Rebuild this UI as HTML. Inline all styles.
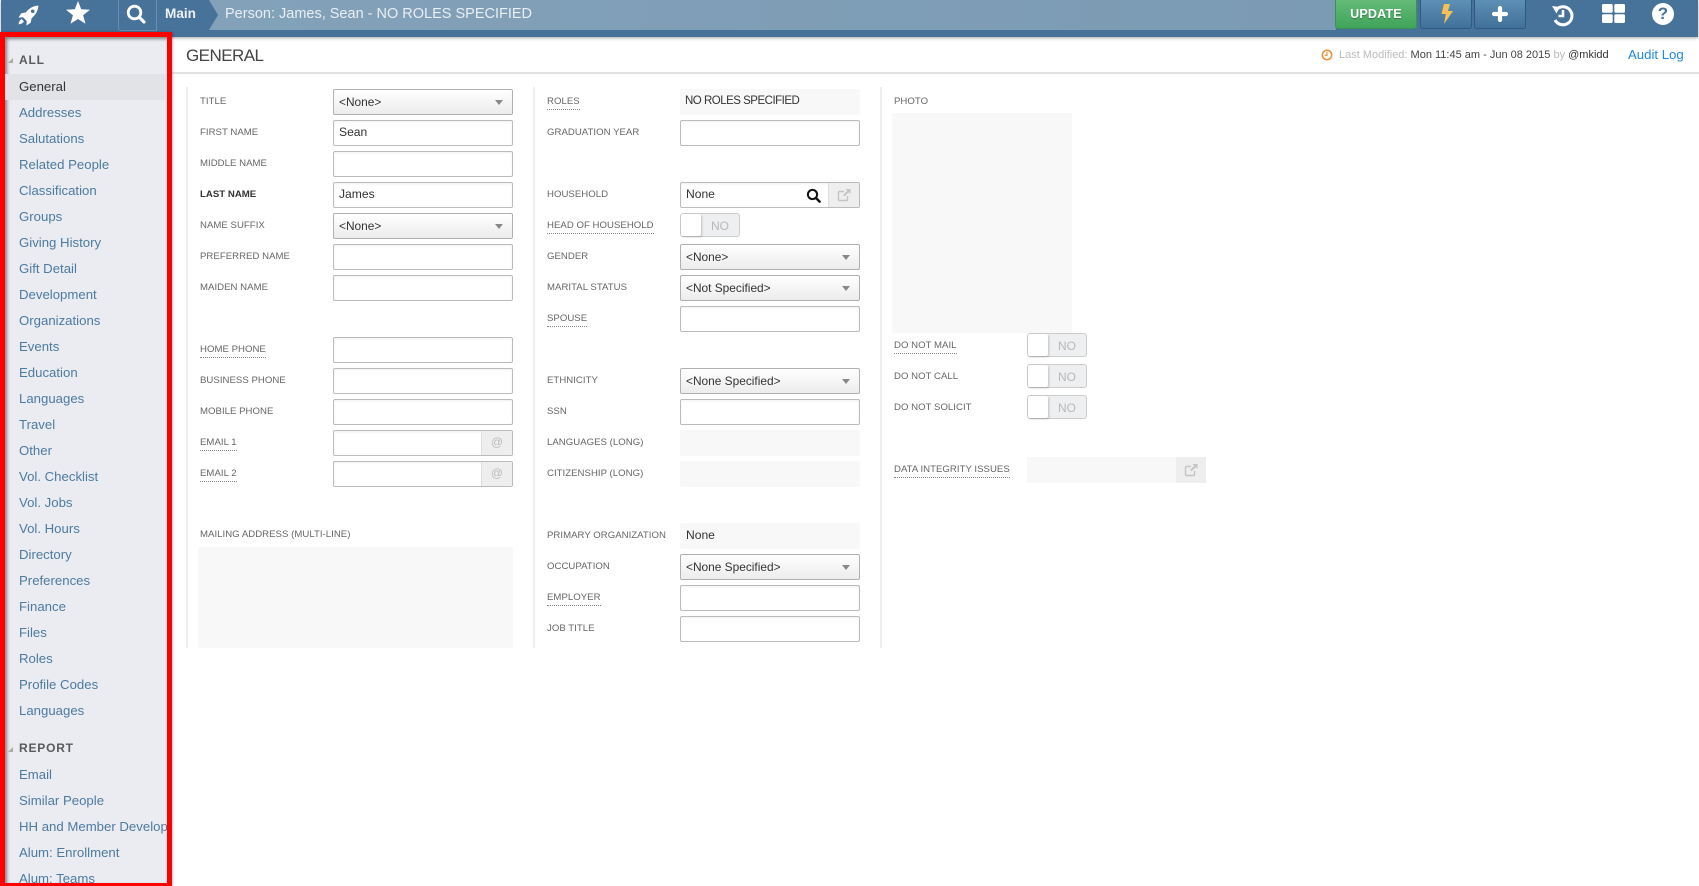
<!DOCTYPE html>
<html>
<head>
<meta charset="utf-8">
<style>
html,body{margin:0;padding:0;background:#fff;}
body{width:1699px;height:886px;overflow:hidden;position:relative;font-family:"Liberation Sans",sans-serif;color:#333;}
.a{position:absolute;}
.hdr{position:absolute;left:1px;top:0;width:1697px;height:37px;background:#47729a;box-shadow:0 1px 3px rgba(0,0,0,.35);}
.bar{position:absolute;left:205px;top:0;width:1130px;height:30px;background:linear-gradient(90deg,#83a2ba,#7b9ab3);}
.tab{position:absolute;left:155px;top:0;width:62px;height:30px;background:#47729a;clip-path:polygon(0 0,53px 0,62px 15px,53px 30px,0 30px);}
.srch{position:absolute;left:117px;top:-1px;width:37px;height:30px;border:1px solid #6b90ad;border-bottom-left-radius:3px;}
.btn{position:absolute;top:-1px;height:30px;box-sizing:border-box;border:1px solid #2f5a80;border-radius:0 0 3px 3px;background:linear-gradient(#5e8fb5,#41709a);}
.upd{position:absolute;left:1335px;top:-1px;width:82px;height:30px;box-sizing:border-box;border:1px solid #3a9352;border-radius:0 0 3px 3px;background:linear-gradient(#64bb78,#3fa45a);color:#fff;font-weight:bold;font-size:12.5px;line-height:28px;text-align:center;text-shadow:0 1px 1px rgba(0,0,0,.3);letter-spacing:.2px;}
.side{position:absolute;left:5px;top:37px;width:162px;height:846px;background:#eaecf2;overflow:hidden;box-shadow:inset 2px 2px 3px rgba(0,0,0,.45);}
.side div{position:absolute;left:14px;white-space:nowrap;font-size:13.2px;line-height:28px;color:#4d7a9f;}
.side .hd{font-weight:bold;font-size:12px;color:#5a5a5a;letter-spacing:.8px;}
.side .sel{left:0;width:162px;height:26px;background:#e1e3e7;}
.side .tri{left:3px;width:0;height:0;border-left:5px solid transparent;border-bottom:5px solid #aaa;}
.red{position:absolute;left:0;top:32px;width:172px;height:854px;box-sizing:border-box;border:solid #fe0000;border-width:5px 5px 3px 5px;box-shadow:1px 0 2px rgba(0,0,0,.25);}
.l{position:absolute;font-size:9.6px;line-height:26px;color:#666;white-space:nowrap;letter-spacing:.03px;}
.l span{border-bottom:1px dotted #888;padding-bottom:2px;}
.l b{color:#333;}
.i,.s,.r{position:absolute;width:180px;height:26px;box-sizing:border-box;font-size:12.1px;line-height:22px;padding-left:5px;color:#333;white-space:nowrap;}
.i{border:1px solid #bbb;border-radius:2px;background:#fff;box-shadow:inset 0 1px 2px rgba(0,0,0,.06);}
.s{border:1px solid #b0b0b0;border-radius:2px;background:linear-gradient(#fff,#ececec);font-size:11.9px;line-height:24px;}
.s:after{content:"";position:absolute;right:9px;top:10px;width:0;height:0;border-left:4.5px solid transparent;border-right:4.5px solid transparent;border-top:5px solid #888;}
.r{background:#f8f8f8;border-radius:2px;border:1px solid #f8f8f8;}
.add{position:absolute;right:0;top:0;bottom:0;width:30px;background:#eeeeee;border-left:1px solid #ddd;text-align:center;color:#bbb;font-size:12px;line-height:23px;}
.add svg{position:absolute;left:8px;top:5px;}
.t{position:absolute;width:60px;height:24px;box-sizing:border-box;border:1px solid #ccc;border-radius:3px;background:#eeeff0;font-size:12px;line-height:25px;color:#b8b8b8;text-align:right;padding-right:10px;}
.t:before{content:"";position:absolute;left:0;top:0;width:20px;height:22px;background:#fff;border-radius:2px;box-shadow:1px 1px 2px rgba(0,0,0,.2);}
.v{position:absolute;top:87px;width:2px;height:561px;background:#eeeeee;}
</style>
</head>
<body>

<div class="a" style="left:171px;top:72px;width:1528px;height:2px;background:#e2e2e2;"></div>
<div class="a" style="left:186px;top:47px;font-size:17px;line-height:18px;color:#444;letter-spacing:-.55px;">GENERAL</div>

<svg class="a" style="left:1321px;top:49px" width="12" height="12" viewBox="0 0 12 12"><circle cx="6" cy="6" r="4.7" fill="none" stroke="#f28c38" stroke-width="1.5"/><path d="M6 3v3.3H3.6" fill="none" stroke="#f28c38" stroke-width="1.2"/></svg>
<div class="a" style="left:1339px;top:47px;font-size:11px;line-height:16px;color:#bbb;white-space:nowrap;">Last Modified: <span style="color:#444">Mon 11:45 am - Jun 08 2015</span> by <span style="color:#333">@mkidd</span></div>
<div class="a" style="left:1628px;top:46px;font-size:13.2px;line-height:17px;color:#1e88e5;white-space:nowrap;">Audit Log</div>

<div class="v" style="left:186px"></div>
<div class="v" style="left:533px"></div>
<div class="v" style="left:880px"></div>

<!-- column 1 -->
<div class="l" style="left:200px;top:89px">TITLE</div><div class="s" style="left:333px;top:89px">&lt;None&gt;</div>
<div class="l" style="left:200px;top:120px">FIRST NAME</div><div class="i" style="left:333px;top:120px">Sean</div>
<div class="l" style="left:200px;top:151px">MIDDLE NAME</div><div class="i" style="left:333px;top:151px"></div>
<div class="l" style="left:200px;top:182px"><b>LAST NAME</b></div><div class="i" style="left:333px;top:182px">James</div>
<div class="l" style="left:200px;top:213px">NAME SUFFIX</div><div class="s" style="left:333px;top:213px">&lt;None&gt;</div>
<div class="l" style="left:200px;top:244px">PREFERRED NAME</div><div class="i" style="left:333px;top:244px"></div>
<div class="l" style="left:200px;top:275px">MAIDEN NAME</div><div class="i" style="left:333px;top:275px"></div>
<div class="l" style="left:200px;top:337px"><span>HOME PHONE</span></div><div class="i" style="left:333px;top:337px"></div>
<div class="l" style="left:200px;top:368px">BUSINESS PHONE</div><div class="i" style="left:333px;top:368px"></div>
<div class="l" style="left:200px;top:399px">MOBILE PHONE</div><div class="i" style="left:333px;top:399px"></div>
<div class="l" style="left:200px;top:430px"><span>EMAIL 1</span></div><div class="i" style="left:333px;top:430px"><div class="add">@</div></div>
<div class="l" style="left:200px;top:461px"><span>EMAIL 2</span></div><div class="i" style="left:333px;top:461px"><div class="add">@</div></div>
<div class="l" style="left:200px;top:522px">MAILING ADDRESS (MULTI-LINE)</div>
<div class="a" style="left:198px;top:547px;width:315px;height:101px;background:#f8f8f8;border-radius:2px;"></div>

<!-- column 2 -->
<div class="l" style="left:547px;top:89px"><span>ROLES</span></div><div class="r" style="left:680px;top:89px;font-size:11.5px;letter-spacing:-.5px;padding-left:4px;">NO ROLES SPECIFIED</div>
<div class="l" style="left:547px;top:120px">GRADUATION YEAR</div><div class="i" style="left:680px;top:120px"></div>
<div class="l" style="left:547px;top:182px">HOUSEHOLD</div>
<div class="i" style="left:680px;top:182px">None
<svg class="a" style="left:125px;top:5px" width="15" height="15" viewBox="0 0 15 15"><circle cx="6.500" cy="6.500" r="4.600" fill="none" stroke="#111" stroke-width="2"/><path d="M10 10l3.600 3.600" stroke="#111" stroke-width="2.400" stroke-linecap="round"/></svg>
<div class="add"><svg width="14" height="14" viewBox="0 0 14 14"><path d="M10.500 8v3.500a1 1 0 0 1-1 1h-7a1 1 0 0 1-1-1v-7a1 1 0 0 1 1-1H7" fill="none" stroke="#c4c4c4" stroke-width="1.400"/><path d="M8.500 1h5v5l-1.800-1.800-4.200 4.200-1.400-1.400 4.200-4.200z" fill="#c4c4c4"/></svg></div></div>
<div class="l" style="left:547px;top:213px"><span>HEAD OF HOUSEHOLD</span></div><div class="t" style="left:680px;top:213px">NO</div>
<div class="l" style="left:547px;top:244px">GENDER</div><div class="s" style="left:680px;top:244px">&lt;None&gt;</div>
<div class="l" style="left:547px;top:275px">MARITAL STATUS</div><div class="s" style="left:680px;top:275px">&lt;Not Specified&gt;</div>
<div class="l" style="left:547px;top:306px"><span>SPOUSE</span></div><div class="i" style="left:680px;top:306px"></div>
<div class="l" style="left:547px;top:368px">ETHNICITY</div><div class="s" style="left:680px;top:368px">&lt;None Specified&gt;</div>
<div class="l" style="left:547px;top:399px">SSN</div><div class="i" style="left:680px;top:399px"></div>
<div class="l" style="left:547px;top:430px">LANGUAGES (LONG)</div><div class="r" style="left:680px;top:430px"></div>
<div class="l" style="left:547px;top:461px">CITIZENSHIP (LONG)</div><div class="r" style="left:680px;top:461px"></div>
<div class="l" style="left:547px;top:523px">PRIMARY ORGANIZATION</div><div class="r" style="left:680px;top:523px">None</div>
<div class="l" style="left:547px;top:554px">OCCUPATION</div><div class="s" style="left:680px;top:554px">&lt;None Specified&gt;</div>
<div class="l" style="left:547px;top:585px"><span>EMPLOYER</span></div><div class="i" style="left:680px;top:585px"></div>
<div class="l" style="left:547px;top:616px">JOB TITLE</div><div class="i" style="left:680px;top:616px"></div>

<!-- column 3 -->
<div class="l" style="left:894px;top:89px">PHOTO</div>
<div class="a" style="left:892px;top:113px;width:180px;height:220px;background:#f8f8f8;"></div>
<div class="l" style="left:894px;top:333px"><span>DO NOT MAIL</span></div><div class="t" style="left:1027px;top:333px">NO</div>
<div class="l" style="left:894px;top:364px">DO NOT CALL</div><div class="t" style="left:1027px;top:364px">NO</div>
<div class="l" style="left:894px;top:395px">DO NOT SOLICIT</div><div class="t" style="left:1027px;top:395px">NO</div>
<div class="l" style="left:894px;top:457px"><span>DATA INTEGRITY ISSUES</span></div>
<div class="a" style="left:1027px;top:457px;width:179px;height:26px;background:#f8f8f8;"><div class="add" style="border-left:0"><svg style="top:6px" width="14" height="14" viewBox="0 0 14 14"><path d="M10.500 8v3.500a1 1 0 0 1-1 1h-7a1 1 0 0 1-1-1v-7a1 1 0 0 1 1-1H7" fill="none" stroke="#c4c4c4" stroke-width="1.400"/><path d="M8.500 1h5v5l-1.800-1.800-4.200 4.200-1.400-1.400 4.200-4.200z" fill="#c4c4c4"/></svg></div></div>

<!-- header -->
<div class="hdr">
  <div class="bar"></div>
  <div class="tab"></div>
  <div class="srch"></div>
</div>
<svg class="a" style="left:18px;top:5px" width="21" height="21" viewBox="0 0 20 20"><path fill="#fff" fill-rule="evenodd" d="M19.500.5c-5 .3-9 2.700-12 6.500L3 8 .5 12l4.300-.3 3.500 3.500L8 19.500l4-2.500 1-4.500c3.800-3 6.200-7 6.500-12.500zM14 4.300a1.700 1.700 0 1 1 0 3.400 1.700 1.700 0 0 1 0-3.400z"/><path fill="#fff" d="M3.500 13.500c-1.500.5-2.500 2-3 5 3-.5 4.500-1.500 5-3z"/></svg>
<svg class="a" style="left:65px;top:0" width="26" height="25" viewBox="0 0 26 25"><path fill="#fff" d="M13 1l3.200 8.300 8.800.4-6.900 5.500 2.400 8.600L13 19l-7.500 4.800 2.400-8.600L1 9.700l8.800-.4z"/></svg>
<svg class="a" style="left:126px;top:4px" width="20" height="20" viewBox="0 0 20 20"><circle cx="8.500" cy="8.500" r="6.300" fill="none" stroke="#fff" stroke-width="2.800"/><path d="M13.500 13.500l4.500 4.500" stroke="#fff" stroke-width="3.200" stroke-linecap="round"/></svg>
<div class="a" style="left:165px;top:5px;font-size:13.6px;font-weight:bold;line-height:18px;color:#edf2f6;">Main</div>
<div class="a" style="left:225px;top:4px;font-size:14.5px;line-height:20px;color:#e9eff4;white-space:nowrap;">Person: James, Sean - NO ROLES SPECIFIED</div>

<div class="upd">UPDATE</div>
<div class="btn" style="left:1420px;width:52px;"></div>
<div class="btn" style="left:1474px;width:52px;"></div>
<svg class="a" style="left:1441px;top:4px" width="12" height="20" viewBox="0 0 12 20"><path fill="#f5c054" d="M3 0h6L7 7h5L3 20l1.800-10H.5z"/></svg>
<svg class="a" style="left:1492px;top:6px" width="16" height="16" viewBox="0 0 16 16"><path d="M8 2v12M2 8h12" stroke="#fff" stroke-width="4.200" stroke-linecap="round"/></svg>
<svg class="a" style="left:1550px;top:3px" width="24" height="24" viewBox="0 0 24 24"><path d="M6.500 6.500A9 9 0 1 1 5 17" fill="none" stroke="#fff" stroke-width="3"/><path d="M2 3l8 1-3.500 6.500z" fill="#fff"/><path d="M13 7v6H8.500" fill="none" stroke="#fff" stroke-width="2.600"/></svg>
<svg class="a" style="left:1602px;top:4px" width="23" height="19" viewBox="0 0 23 19"><rect x="0" y="0" width="10.700" height="8.700" rx="1.500" fill="#fff"/><rect x="12.300" y="0" width="10.700" height="8.700" rx="1.500" fill="#fff"/><rect x="0" y="10.300" width="10.700" height="8.700" rx="1.500" fill="#fff"/><rect x="12.300" y="10.300" width="10.700" height="8.700" rx="1.500" fill="#fff"/></svg>
<div class="a" style="left:1652px;top:3px;width:22px;height:22px;border-radius:50%;background:#fff;color:#47729a;font-weight:bold;font-size:17px;line-height:22px;text-align:center;">?</div>

<!-- sidebar -->
<div class="side">
  <div class="tri" style="top:21px"></div>
  <div class="hd" style="top:9px">ALL</div>
  <div class="sel" style="top:37px"></div>
  <div style="top:36px;color:#333">General</div>
  <div style="top:62px">Addresses</div>
  <div style="top:88px">Salutations</div>
  <div style="top:114px">Related People</div>
  <div style="top:140px">Classification</div>
  <div style="top:166px">Groups</div>
  <div style="top:192px">Giving History</div>
  <div style="top:218px">Gift Detail</div>
  <div style="top:244px">Development</div>
  <div style="top:270px">Organizations</div>
  <div style="top:296px">Events</div>
  <div style="top:322px">Education</div>
  <div style="top:348px">Languages</div>
  <div style="top:374px">Travel</div>
  <div style="top:400px">Other</div>
  <div style="top:426px">Vol. Checklist</div>
  <div style="top:452px">Vol. Jobs</div>
  <div style="top:478px">Vol. Hours</div>
  <div style="top:504px">Directory</div>
  <div style="top:530px">Preferences</div>
  <div style="top:556px">Finance</div>
  <div style="top:582px">Files</div>
  <div style="top:608px">Roles</div>
  <div style="top:634px">Profile Codes</div>
  <div style="top:660px">Languages</div>
  <div class="tri" style="top:710px"></div>
  <div class="hd" style="top:697px">REPORT</div>
  <div style="top:724px">Email</div>
  <div style="top:750px">Similar People</div>
  <div style="top:776px">HH and Member Development</div>
  <div style="top:802px">Alum: Enrollment</div>
  <div style="top:828px">Alum: Teams</div>
</div>
<div class="red"></div>
</body>
</html>
